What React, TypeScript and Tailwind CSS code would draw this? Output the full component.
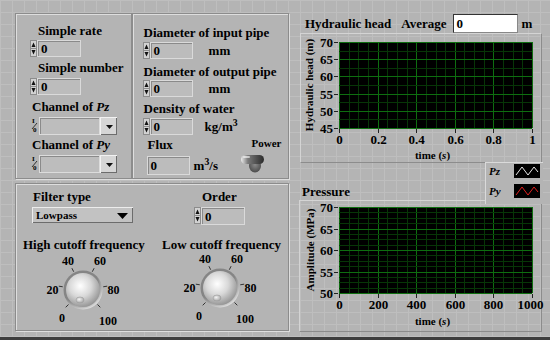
import React from "react";

function Spinner() {
  return (
    <svg width="7" height="17" viewBox="0 0 7 17" className="shrink-0">
      <rect x="0" y="0" width="7" height="17" fill="#d2d2d2" />
      <rect x="0.5" y="0.5" width="6" height="16" fill="none" stroke="#8c8c8c" />
      <line x1="1" x2="6" y1="8.5" y2="8.5" stroke="#8c8c8c" />
      <path d="M1.5 7 L3.5 2.5 L5.5 7 Z" fill="#111" />
      <path d="M1.5 10 L5.5 10 L3.5 14.5 Z" fill="#111" />
    </svg>
  );
}

function Numeric({ box }: { box: string }) {
  return (
    <div className="flex items-start">
      <Spinner />
      <div
        className={`flex items-center border border-[#dadada] bg-[#bcbcbc] pl-[3px] text-[13px] leading-none shadow-[inset_1px_1px_0_#8a8a8a] ${box}`}
      >
        0
      </div>
    </div>
  );
}

// the little "I/O" mark at the left of a channel box
function IOMark() {
  return (
    <div className="relative w-[8px] text-[7px] leading-[7px]">
      <span className="absolute top-[1px] left-[1px]">I</span>
      <svg width="8" height="18" viewBox="0 0 8 18" className="absolute top-0 left-0">
        <line x1="1" y1="12" x2="6" y2="6" stroke="#111" strokeWidth="0.8" />
      </svg>
      <span className="absolute top-[10px] left-[2px]">0</span>
    </div>
  );
}

function Channel() {
  return (
    <div className="flex h-[18px] w-[86px] items-stretch">
      <IOMark />
      <div className="flex-1 border border-[#dcdcdc] bg-[#bdbdbd] shadow-[inset_1px_1px_0_#8a8a8a]" />
      <div className="flex w-[17px] items-center justify-center border-t border-l border-[#f2f2f2] bg-[#d6d6d6] shadow-[inset_-1px_-1px_0_#6c6c6c]">
        <svg width="7" height="4" viewBox="0 0 7 4">
          <path d="M0 0H7L3.5 4Z" fill="#111" />
        </svg>
      </div>
    </div>
  );
}

function Toggle() {
  return (
    <svg width="26" height="24" viewBox="0 0 26 24">
      <defs>
        <linearGradient id="lever" x1="0" x2="1" y1="0" y2="0">
          <stop offset="0" stopColor="#ececec" />
          <stop offset="0.3" stopColor="#7a7a7a" />
          <stop offset="1" stopColor="#2a2a2a" />
        </linearGradient>
        <radialGradient id="leverBase" cx="50%" cy="40%" r="60%">
          <stop offset="0" stopColor="#8a8a8a" />
          <stop offset="1" stopColor="#4a4a4a" />
        </radialGradient>
      </defs>
      <ellipse cx="15" cy="15" rx="6" ry="6.5" fill="url(#leverBase)" />
      <rect x="1" y="4" width="23" height="9" rx="4.5" fill="url(#lever)" />
      <rect x="3" y="5" width="7" height="2" rx="1" fill="#ffffff" opacity="0.6" />
    </svg>
  );
}

function Knob({ id }: { id: string }) {
  const ticks = [0, 20, 40, 60, 80, 100];
  return (
    <svg
      width="100"
      height="72"
      viewBox="-50 -35 100 72"
      fontFamily="'Liberation Serif', serif"
      fontWeight="bold"
      fontSize="12"
    >
      <defs>
        <radialGradient id={`${id}b`} cx="42%" cy="38%" r="65%">
          <stop offset="0" stopColor="#ffffff" />
          <stop offset="0.5" stopColor="#d8d8d8" />
          <stop offset="1" stopColor="#929292" />
        </radialGradient>
        <radialGradient id={`${id}r`} cx="40%" cy="35%" r="70%">
          <stop offset="0.7" stopColor="#858585" />
          <stop offset="1" stopColor="#ececec" />
        </radialGradient>
        <radialGradient id={`${id}d`} cx="40%" cy="40%" r="60%">
          <stop offset="0" stopColor="#f4f4f4" />
          <stop offset="1" stopColor="#a8a8a8" />
        </radialGradient>
      </defs>
      {ticks.map((v) => {
        const a = ((225 - 2.7 * v) * Math.PI) / 180;
        return (
          <line
            key={v}
            x1={20.5 * Math.cos(a)}
            y1={-20.5 * Math.sin(a)}
            x2={24.5 * Math.cos(a)}
            y2={-24.5 * Math.sin(a)}
            stroke="#333"
            strokeWidth="1"
          />
        );
      })}
      <circle r="19.5" fill={`url(#${id}r)`} />
      <circle r="17" fill={`url(#${id}b)`} />
      <ellipse cx="-3" cy="10" rx="4" ry="3" fill={`url(#${id}d)`} stroke="#9c9c9c" strokeWidth="0.6" />
      <text x="-15" y="-25" textAnchor="middle">40</text>
      <text x="17" y="-25" textAnchor="middle">60</text>
      <text x="-24.5" y="4" textAnchor="end">20</text>
      <text x="24.5" y="4" textAnchor="start">80</text>
      <text x="-21" y="32" textAnchor="middle">0</text>
      <text x="25" y="35" textAnchor="middle">100</text>
    </svg>
  );
}

type ChartProps = {
  w: number;
  h: number;
  px: number;
  py: number;
  ph: number;
  yLabels: string[];
  xLabels: string[];
  rows: number;
  rowMajor: number;
  yTitle: string;
  ytx: number;
  titleDy: number;
};

function Chart(p: ChartProps) {
  const pw = 193;
  const cols = 20;
  const grid: React.ReactNode[] = [];
  for (let i = 0; i <= cols; i++) {
    const x = Math.round(p.px + (i * pw) / cols) + 0.5;
    grid.push(
      <line
        key={"c" + i}
        x1={x}
        x2={x}
        y1={p.py}
        y2={p.py + p.ph}
        stroke={i % 4 === 0 ? "#0e6e10" : "#073607"}
      />
    );
  }
  for (let i = 0; i <= p.rows; i++) {
    const y = Math.round(p.py + (i * p.ph) / p.rows) + 0.5;
    grid.push(
      <line
        key={"r" + i}
        x1={p.px}
        x2={p.px + pw}
        y1={y}
        y2={y}
        stroke={i % p.rowMajor === 0 ? "#0e6e10" : "#073607"}
      />
    );
  }
  const ny = p.yLabels.length - 1;
  const nx = p.xLabels.length - 1;
  return (
    <svg
      width={p.w}
      height={p.h}
      className="overflow-visible"
      fontFamily="'Liberation Serif', serif"
      fontWeight="bold"
      fontSize="13"
    >
      <rect x={p.px} y={p.py} width={pw} height={p.ph} fill="#000" />
      {grid}
      {p.yLabels.map((l, i) => {
        const y = Math.round(p.py + (i * p.ph) / ny) + 0.5;
        return (
          <g key={l}>
            <line x1={p.px - 5} x2={p.px - 1} y1={y} y2={y} stroke="#222" />
            <text x={p.px - 6} y={y + 4.5} textAnchor="end">
              {l}
            </text>
          </g>
        );
      })}
      {p.xLabels.map((l, i) => {
        const x = Math.round(p.px + (i * pw) / nx) + 0.5;
        return (
          <g key={l}>
            <line x1={x} x2={x} y1={p.py + p.ph + 1} y2={p.py + p.ph + 5} stroke="#222" />
            <text x={i === nx && l.length > 2 ? x - 2 : x} y={p.py + p.ph + 16} textAnchor="middle">
              {l}
            </text>
          </g>
        );
      })}
      <text
        x={p.px + pw / 2 - 3}
        y={p.py + p.ph + p.titleDy}
        textAnchor="middle"
        fontSize="11"
      >
        time (<tspan fontStyle="italic">s</tspan>)
      </text>
      <text
        transform={`translate(${p.ytx} ${p.py + p.ph / 2}) rotate(-90)`}
        textAnchor="middle"
        fontSize="11"
      >
        {p.yTitle}
      </text>
    </svg>
  );
}

function Swatch({ color }: { color: string }) {
  return (
    <svg width="26" height="14" viewBox="0 0 26 14">
      <rect width="26" height="14" fill="#000" />
      <polyline
        points="2,11 8,3 14,11 20,3 24,8"
        fill="none"
        stroke={color}
        strokeWidth="1"
      />
    </svg>
  );
}

const groove =
  "border border-[#8c8c8c] shadow-[inset_1px_1px_0_#dedede,1px_1px_0_#dedede]";

export default function App() {
  return (
    <div className="relative flex h-[340px] w-[550px] flex-col overflow-hidden bg-[#b4b4b4] font-['Liberation_Serif',serif] font-bold text-black">
      <div className="flex h-[337px] bg-[linear-gradient(to_right,#bebebe_1px,transparent_1px),linear-gradient(to_bottom,#bebebe_1px,transparent_1px)] pt-[13px] pl-[15px] [background-size:12px_12px]">
        {/* left side */}
        <div className="flex w-[274px] flex-col">
          <div className="flex h-[166px]">
            <div className={`flex w-[117px] flex-col bg-[#b4b4b4] text-[13px] leading-[15px] ${groove}`}>
              <div className="mt-[9px] ml-[22px]">Simple rate</div>
              <div className="mt-[2px] ml-[14px]">
                <Numeric box="w-[44px] h-[17px]" />
              </div>
              <div className="mt-[3px] ml-[22px]">Simple number</div>
              <div className="mt-[3px] ml-[14px]">
                <Numeric box="w-[44px] h-[17px]" />
              </div>
              <div className="mt-[4px] ml-[16px]">
                Channel of <i>Pz</i>
              </div>
              <div className="mt-[3px] ml-[15px]">
                <Channel />
              </div>
              <div className="mt-[2px] ml-[16px]">
                Channel of <i>Py</i>
              </div>
              <div className="mt-[3px] ml-[15px]">
                <Channel />
              </div>
            </div>
            <div className={`flex w-[158px] flex-col bg-[#b4b4b4] text-[13px] leading-[15px] ${groove}`}>
              <div className="mt-[11px] ml-[11px]">Diameter of input pipe</div>
              <div className="mt-[2px] ml-[10px] flex items-center">
                <Numeric box="w-[43px] h-[17px]" />
                <span className="ml-[16px]">mm</span>
              </div>
              <div className="mt-[5px] ml-[11px]">Diameter of output pipe</div>
              <div className="mt-[1px] ml-[10px] flex items-center">
                <Numeric box="w-[43px] h-[17px]" />
                <span className="ml-[16px]">mm</span>
              </div>
              <div className="mt-[4px] ml-[11px]">Density of water</div>
              <div className="mt-[2px] ml-[10px] flex items-center">
                <Numeric box="w-[43px] h-[17px]" />
                <span className="ml-[12px]">
                  kg/m<sup>3</sup>
                </span>
              </div>
              <div className="mt-[2px] flex">
                <div className="ml-[14px] flex w-[94px] flex-col">
                  <span className="pl-[1px]">Flux</span>
                  <div className="mt-[4px] flex items-center">
                    <div className="flex h-[19px] w-[43px] items-center border border-[#dadada] bg-[#bcbcbc] pl-[3px] leading-none shadow-[inset_1px_1px_0_#8a8a8a]">
                      0
                    </div>
                    <span className="ml-[4px]">
                      m<sup>3</sup>/s
                    </span>
                  </div>
                </div>
                <div className="flex flex-col">
                  <span className="ml-[11px] text-[11px] leading-[13px]">Power</span>
                  <div className="mt-[1px] -ml-[1px]">
                    <Toggle />
                  </div>
                </div>
              </div>
            </div>
          </div>
          <div className={`mt-[4px] flex h-[148px] bg-[#b4b4b4] text-[13px] leading-[15px] ${groove}`}>
            <div className="flex w-[146px] flex-col">
              <div className="mt-[5px] ml-[17px]">Filter type</div>
              <div className="mt-[3px] ml-[16px] flex h-[16px] w-[101px] items-center justify-between border-t border-l border-[#ececec] bg-[#c2c2c2] pr-[5px] pl-[3px] shadow-[inset_-1px_-1px_0_#6c6c6c]">
                <span className="text-[11px] leading-none">Lowpass</span>
                <svg width="11" height="6" viewBox="0 0 11 6">
                  <path d="M0 0H11L5.5 6Z" fill="#000" />
                </svg>
              </div>
              <div className="mt-[14px] ml-[7px]">High cutoff frequency</div>
              <div className="mt-[3px] ml-[17px]">
                <Knob id="k1" />
              </div>
            </div>
            <div className="flex flex-col">
              <div className="mt-[5px] ml-[40px]">Order</div>
              <div className="mt-[3px] ml-[32px]">
                <Numeric box="w-[44px] h-[18px]" />
              </div>
              <div className="mt-[12px]">Low cutoff frequency</div>
              <div className="mt-[1px] ml-[8px]">
                <Knob id="k2" />
              </div>
            </div>
          </div>
        </div>

        {/* right side */}
        <div className="ml-[10px] flex w-[244px] flex-col">
          <div className="flex h-[20px] items-center text-[13px] leading-[15px]">
            <span className="ml-[6px]">Hydraulic head</span>
            <span className="ml-[10px]">Average</span>
            <div className="ml-[6px] flex h-[19px] w-[65px] items-center border border-[#333] border-r-[#888] border-b-[#888] bg-white pl-[3px] leading-none">
              0
            </div>
            <span className="ml-[4px]">m</span>
          </div>
          <div className="ml-[1px] h-[130px] w-[242px] border border-[#d4d4d4] border-r-[#8c8c8c] border-b-[#8c8c8c]">
            <Chart
              w={240}
              h={128}
              px={38}
              py={8}
              ph={86}
              yLabels={["70", "65", "60", "55", "50", "45"]}
              xLabels={["0", "0.2", "0.4", "0.6", "0.8", "1"]}
              rows={10}
              rowMajor={2}
              yTitle="Hydraulic head (m)"
              ytx={12}
              titleDy={31}
            />
          </div>
          <div className="mt-[21px] ml-[3px] text-[13px] leading-[15px]">Pressure</div>
          <div className="mt-[1px] h-[132px] w-[243px] border border-[#d4d4d4] border-r-[#8c8c8c] border-b-[#8c8c8c]">
            <Chart
              w={241}
              h={130}
              px={39}
              py={6}
              ph={86}
              yLabels={["70", "65", "60", "55", "50"]}
              xLabels={["0", "200", "400", "600", "800", "1000"]}
              rows={16}
              rowMajor={4}
              yTitle="Amplitude (MPa)"
              ytx={14}
              titleDy={32}
            />
          </div>
        </div>
      </div>
      <div className="h-[3px] bg-[#3e3e3e]" />

      {/* plot legend, overlapping the graphs */}
      <div className="absolute top-[162px] left-[485px] flex h-[42px] w-[58px] flex-col gap-[6px] border-t border-l border-[#dadada] bg-[#b4b4b4] pt-[1px] pl-[3px] text-[11px] italic leading-[14px]">
        <div className="flex items-center">
          <span className="w-[25px]">Pz</span>
          <Swatch color="#e8e8e8" />
        </div>
        <div className="flex items-center">
          <span className="w-[25px]">Py</span>
          <Swatch color="#e02020" />
        </div>
      </div>
    </div>
  );
}
